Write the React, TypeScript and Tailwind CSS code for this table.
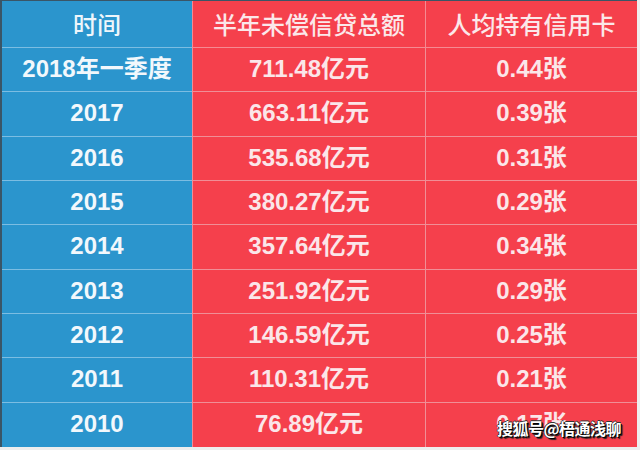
import React from 'react';

const rows = [
  ['2018年一季度', '711.48亿元', '0.44张'],
  ['2017', '663.11亿元', '0.39张'],
  ['2016', '535.68亿元', '0.31张'],
  ['2015', '380.27亿元', '0.29张'],
  ['2014', '357.64亿元', '0.34张'],
  ['2013', '251.92亿元', '0.29张'],
  ['2012', '146.59亿元', '0.25张'],
  ['2011', '110.31亿元', '0.21张'],
  ['2010', '76.89亿元', '0.17张'],
];

const font = { fontFamily: '"Liberation Sans", "Noto Sans CJK SC", sans-serif' };

export default function App() {
  return (
    <div className="relative w-[640px] h-[450px] bg-[#eeeeee] overflow-hidden" style={font}>
      <div className="grid grid-cols-[190px_233px_212px] grid-rows-[47px_repeat(9,1fr)] h-[447px] w-[637px] border-l-2 border-t border-[#3a5566]">
        {/* header */}
        <div className="bg-[#2b95cd] border-b border-[#7cbde2] flex items-center justify-center pt-[3px] text-[24px] text-[#eef6fb] font-medium">
          时间
        </div>
        <div className="bg-[#f5404c] border-b border-l border-[#f58a92] flex items-center justify-center pt-[3px] text-[24px] text-[#fbe8ea] font-medium">
          半年未偿信贷总额
        </div>
        <div className="bg-[#f5404c] border-b border-l border-[#f58a92] flex items-center justify-center pt-[3px] text-[24px] text-[#fbe8ea] font-medium">
          人均持有信用卡
        </div>
        {rows.map((r, i) => (
          <React.Fragment key={i}>
            <div className={`bg-[#2b95cd] flex items-center justify-center pb-[1px] text-[24px] font-bold text-[#f2f8fc] ${i < 8 ? 'border-b border-[#7cbde2]' : ''}`}>
              {r[0]}
            </div>
            <div className={`bg-[#f5404c] border-l border-[#f08e96] flex items-center justify-center pb-[1px] text-[24px] font-bold text-[#fbe6e9] ${i < 8 ? 'border-b' : ''}`}>
              {r[1]}
            </div>
            <div className={`bg-[#f5404c] border-l border-[#f08e96] flex items-center justify-center pb-[1px] text-[24px] font-bold text-[#fbe6e9] ${i < 8 ? 'border-b' : ''}`}>
              {r[2]}
            </div>
          </React.Fragment>
        ))}
      </div>
      {/* watermark */}
      <div
        className="absolute left-[497px] top-[420px] text-[16px] font-bold text-white leading-none tracking-[-0.5px]"
        style={{ fontFamily: '"Noto Sans CJK SC", sans-serif', textShadow: '1px 1px 0 #000, 2px 2px 1px #222, -1px 0 0 #333, 0 -1px 0 #333' }}
      >
        搜狐号@梧通浅聊
      </div>
    </div>
  );
}
